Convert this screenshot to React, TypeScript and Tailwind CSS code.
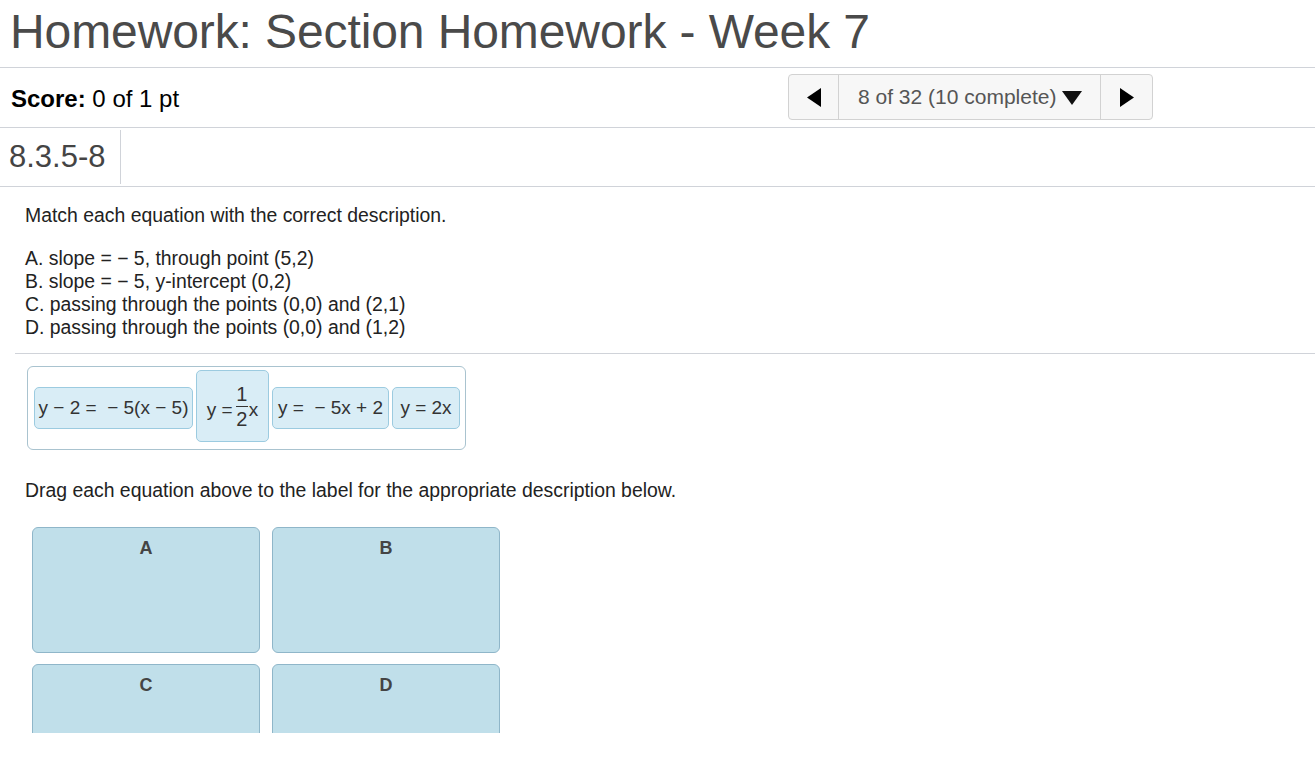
import React from "react";

const F = { fontFamily: '"Liberation Sans", Arial, sans-serif' };

function Tile({ w, h, children }: { w: string; h: string; children: React.ReactNode }) {
  return (
    <div
      className={`${w} ${h} flex items-center justify-center rounded-[5px] border border-[#9ccbe0] bg-[#d9edf6] text-[19px] text-[#333] whitespace-nowrap`}
    >
      {children}
    </div>
  );
}

function Drop({ label, h }: { label: string; h: string }) {
  return (
    <div className={`w-[228px] ${h} rounded-[6px] border border-[#8fb6c9] bg-[#c0dfea] flex justify-center pt-[9px]`}>
      <span className="text-[18px] font-bold text-[#444] leading-[22px]">{label}</span>
    </div>
  );
}

export default function App() {
  return (
    <div className="w-[1315px] h-[757px] bg-white overflow-hidden" style={F}>
      <div className="h-[68px] border-b border-[#d0d3d9] pl-[10px] pt-[3px]">
        <h1 className="text-[48px] leading-[58px] text-[#4a4a4a] tracking-[-0.1px]">
          Homework: Section Homework - Week 7
        </h1>
      </div>

      <div className="h-[60px] border-b border-[#d0d3d9] flex items-center justify-between pl-[11px] pr-[162px]">
        <div className="text-[24px] text-black mt-[2px]">
          <span className="font-bold">Score:</span> 0 of 1 pt
        </div>
        <div className="flex h-[46px] mt-[-1px] rounded-[4px] border border-[#d2d2d2] bg-[#f7f7f7]">
          <div className="w-[50px] flex items-center justify-center border-r border-[#d2d2d2]">
            <svg width="14" height="19" viewBox="0 0 14 19">
              <polygon points="14,0 14,19 0,9.5" fill="#000" />
            </svg>
          </div>
          <div className="w-[262px] flex items-center pl-[19px] text-[21px] text-[#555] border-r border-[#d2d2d2]">
            <span>8 of 32 (10 complete)</span>
            <svg className="ml-[6px] mt-[2px]" width="20" height="14" viewBox="0 0 20 14">
              <polygon points="0,0 20,0 10,14" fill="#111" />
            </svg>
          </div>
          <div className="w-[51px] flex items-center justify-center">
            <svg width="14" height="19" viewBox="0 0 14 19">
              <polygon points="0,0 0,19 14,9.5" fill="#000" />
            </svg>
          </div>
        </div>
      </div>

      <div className="h-[59px] border-b border-[#d0d3d9] flex items-stretch">
        <div className="w-[121px] flex items-center pl-[9px] my-[2px] border-r border-[#d0d3d9] text-[31px] text-[#444]">
          8.3.5-8
        </div>
      </div>

      <div className="h-[546px] overflow-hidden pl-[15px]">
        <div className="pl-[10px] pt-[16px] text-[19.4px] text-[#222]">
          <p className="leading-[24px]">Match each equation with the correct description.</p>
          <div className="mt-[20px] leading-[23px]">
            <p>A. slope =  − 5, through point (5,2)</p>
            <p>B. slope =  − 5, y-intercept (0,2)</p>
            <p>C. passing through the points (0,0) and (2,1)</p>
            <p>D. passing through the points (0,0) and (1,2)</p>
          </div>
        </div>
        <div className="mt-[14px] border-t border-[#d0d3d9]" />

        <div className="ml-[12px] mt-[12px] w-[439px] h-[84px] rounded-[6px] border border-[#a9c3cf] flex items-center gap-[3px] pl-[6px]">
          <Tile w="w-[159px]" h="h-[42px]">
            <span>y − 2 =&nbsp; − 5(x − 5)</span>
          </Tile>
          <div className="-mt-[4px]">
            <Tile w="w-[73px]" h="h-[72px]">
              <span className="mt-[9px]">y =</span>
              <span className="inline-flex flex-col items-center ml-[3px] mr-[1px] text-[20px] leading-[20px]">
                <span>1</span>
                <span className="w-[12px] h-[1px] bg-[#333] my-[2px]" />
                <span>2</span>
              </span>
              <span className="mt-[9px]">x</span>
            </Tile>
          </div>
          <Tile w="w-[117px]" h="h-[42px]">
            <span>y =&nbsp; − 5x + 2</span>
          </Tile>
          <Tile w="w-[68px]" h="h-[42px]">
            <span>y = 2x</span>
          </Tile>
        </div>

        <p className="pl-[10px] mt-[28px] text-[19.4px] leading-[24px] text-[#222]">
          Drag each equation above to the label for the appropriate description below.
        </p>

        <div className="ml-[17px] mt-[25px] grid grid-cols-[228px_228px] gap-x-[12px] gap-y-[11px]">
          <Drop label="A" h="h-[126px]" />
          <Drop label="B" h="h-[126px]" />
          <Drop label="C" h="h-[126px]" />
          <Drop label="D" h="h-[126px]" />
        </div>
      </div>
    </div>
  );
}
